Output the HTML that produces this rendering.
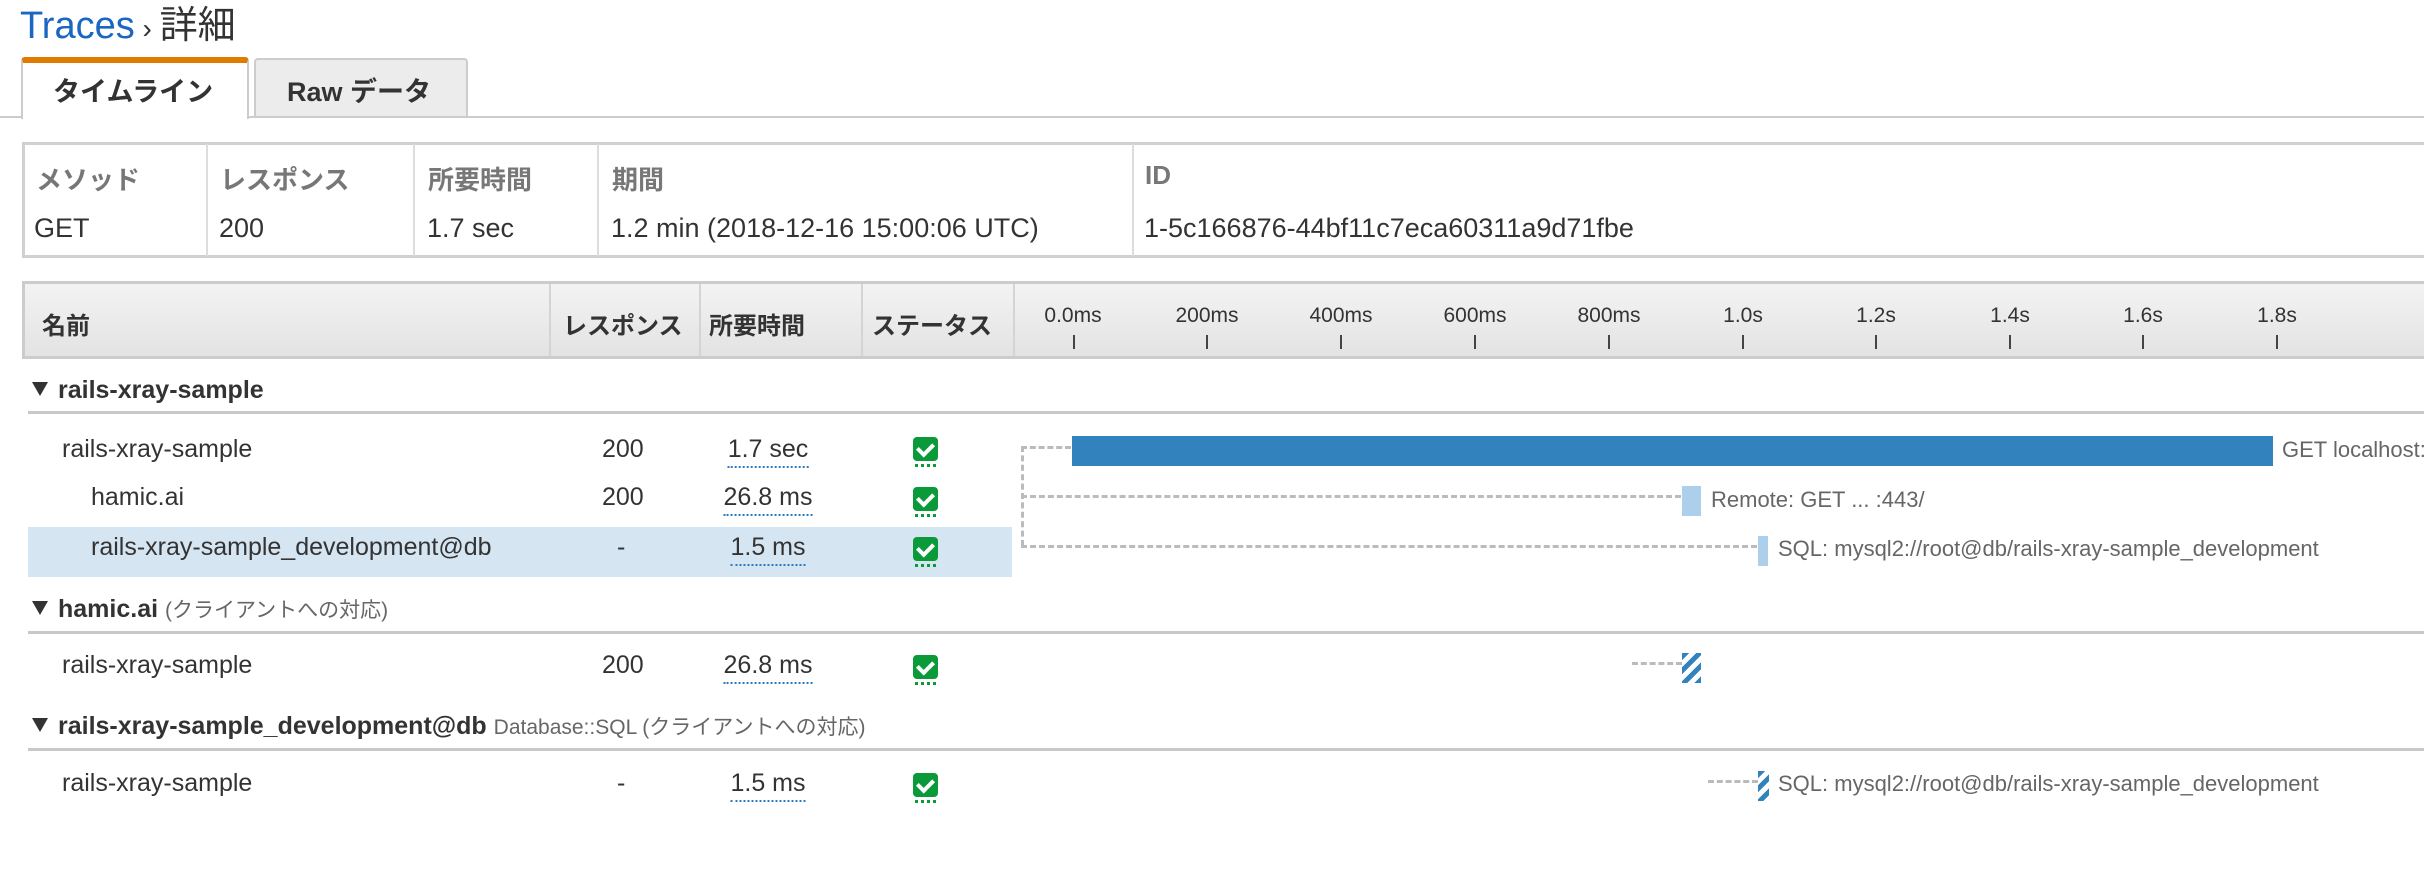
<!DOCTYPE html>
<html><head><meta charset="utf-8"><style>
*{margin:0;padding:0;box-sizing:border-box}
body{width:2424px;height:874px;overflow:hidden;background:#fff;font-family:"Liberation Sans","Noto Sans CJK JP",sans-serif;color:#333;position:relative}
.a{position:absolute;white-space:nowrap}
.hd{font-weight:bold;color:#777;font-size:26px}
.v{font-size:27px;color:#333}
.th{font-weight:bold;color:#333;font-size:24px}
.tl{font-size:21px;color:#333;transform:translateX(-50%)}
.tick{position:absolute;width:2px;height:14px;background:#444;top:335px}
.r{font-size:25px;color:#333}
.g{font-weight:bold;font-size:25px;color:#333}
.tri{display:inline-block;width:0;height:0;border-left:8px solid transparent;border-right:8px solid transparent;border-top:14px solid #333;margin-right:10px;vertical-align:2px}
.sub{font-size:21px;color:#666;font-weight:normal}
.dur{font-size:25px;border-bottom:2px dotted #2a7bbf;padding-bottom:2px;transform:translateX(-50%)}
.ck{position:absolute;width:25px;height:24px;background:#0a9a3a;border-radius:4px}
.ck:after{content:"";position:absolute;left:7px;top:3px;width:7px;height:12px;border:solid #fff;border-width:0 4px 4px 0;transform:rotate(45deg)}
.ckd{position:absolute;width:25px;border-bottom:3px dotted #0a9a3a}
.line{position:absolute;height:3px;background:#c8c8c8}
.dh{position:absolute;height:0;border-top:3px dashed #bbb}
.dv{position:absolute;width:0;border-left:3px dashed #bbb}
.lb{font-size:22px;color:#666}
.hatch{position:absolute;background:repeating-linear-gradient(135deg,#3182bd 0 5px,#fff 5px 10px)}
</style></head><body>

<div class="a" style="left:20px;top:-6px;font-size:38px;color:#1a66c2">Traces<span style="color:#333;font-size:28px"> › </span><span style="color:#333">詳細</span></div>

<!-- tabs -->
<div class="a" style="left:0;top:116px;width:2424px;height:2px;background:#ccc"></div>
<div class="a" style="left:21px;top:57px;width:228px;height:62px;background:#fff;border:2px solid #ccc;border-top:6px solid #e07b00;border-bottom:none;border-radius:4px 4px 0 0"></div>
<div class="a" style="left:53px;top:70px;font-size:27px;font-weight:bold">タイムライン</div>
<div class="a" style="left:254px;top:58px;width:214px;height:58px;background:#ececec;border:2px solid #ccc;border-bottom:none;border-radius:4px 4px 0 0"></div>
<div class="a" style="left:287px;top:70px;font-size:27px;font-weight:bold">Raw データ</div>

<!-- info table -->
<div class="a" style="left:22px;top:142px;width:2402px;height:116px;border:3px solid #d0d0d0;border-right:none"></div>
<div class="a" style="left:206px;top:144px;width:2px;height:112px;background:#ddd"></div>
<div class="a" style="left:413px;top:144px;width:2px;height:112px;background:#ddd"></div>
<div class="a" style="left:597px;top:144px;width:2px;height:112px;background:#ddd"></div>
<div class="a" style="left:1132px;top:144px;width:2px;height:112px;background:#ddd"></div>
<div class="a hd" style="left:36px;top:160px">メソッド</div>
<div class="a hd" style="left:220px;top:160px">レスポンス</div>
<div class="a hd" style="left:428px;top:160px">所要時間</div>
<div class="a hd" style="left:612px;top:160px">期間</div>
<div class="a hd" style="left:1145px;top:160px">ID</div>
<div class="a v" style="left:34px;top:213px">GET</div>
<div class="a v" style="left:219px;top:213px">200</div>
<div class="a v" style="left:427px;top:213px">1.7 sec</div>
<div class="a v" style="left:611px;top:213px">1.2 min (2018-12-16 15:00:06 UTC)</div>
<div class="a v" style="left:1144px;top:213px">1-5c166876-44bf11c7eca60311a9d71fbe</div>

<!-- main header -->
<div class="a" style="left:22px;top:281px;width:2402px;height:78px;background:linear-gradient(#f3f3f3,#e3e3e3);border:3px solid #ccc;border-right:none"></div>
<div class="a" style="left:549px;top:284px;width:2px;height:72px;background:#d4d4d4"></div>
<div class="a" style="left:699px;top:284px;width:2px;height:72px;background:#d4d4d4"></div>
<div class="a" style="left:861px;top:284px;width:2px;height:72px;background:#d4d4d4"></div>
<div class="a" style="left:1013px;top:284px;width:2px;height:72px;background:#d4d4d4"></div>
<div class="a th" style="left:42px;top:306px">名前</div>
<div class="a th" style="left:563px;top:306px">レスポンス</div>
<div class="a th" style="left:709px;top:306px">所要時間</div>
<div class="a th" style="left:872px;top:306px">ステータス</div>
<div class="a tl" style="left:1073px;top:304px">0.0ms</div><div class="tick" style="left:1073px"></div>
<div class="a tl" style="left:1207px;top:304px">200ms</div><div class="tick" style="left:1206px"></div>
<div class="a tl" style="left:1341px;top:304px">400ms</div><div class="tick" style="left:1340px"></div>
<div class="a tl" style="left:1475px;top:304px">600ms</div><div class="tick" style="left:1474px"></div>
<div class="a tl" style="left:1609px;top:304px">800ms</div><div class="tick" style="left:1608px"></div>
<div class="a tl" style="left:1743px;top:304px">1.0s</div><div class="tick" style="left:1742px"></div>
<div class="a tl" style="left:1876px;top:304px">1.2s</div><div class="tick" style="left:1875px"></div>
<div class="a tl" style="left:2010px;top:304px">1.4s</div><div class="tick" style="left:2009px"></div>
<div class="a tl" style="left:2143px;top:304px">1.6s</div><div class="tick" style="left:2142px"></div>
<div class="a tl" style="left:2277px;top:304px">1.8s</div><div class="tick" style="left:2276px"></div>

<!-- group 1 -->
<div class="a g" style="left:32px;top:376px"><span class="tri"></span>rails-xray-sample</div>
<div class="line" style="left:28px;top:411px;width:2396px"></div>
<div class="a" style="left:28px;top:527px;width:984px;height:50px;background:#d5e5f2"></div>

<div class="a r" style="left:62px;top:435px">rails-xray-sample</div>
<div class="a r" style="left:602px;top:435px">200</div>
<div class="a dur" style="left:768px;top:435px">1.7 sec</div>
<div class="ck" style="left:913px;top:437px"></div><div class="ckd" style="left:915px;top:464px;width:21px"></div>

<div class="a r" style="left:91px;top:483px">hamic.ai</div>
<div class="a r" style="left:602px;top:483px">200</div>
<div class="a dur" style="left:768px;top:483px">26.8 ms</div>
<div class="ck" style="left:913px;top:487px"></div><div class="ckd" style="left:915px;top:514px;width:21px"></div>

<div class="a r" style="left:91px;top:533px">rails-xray-sample_development@db</div>
<div class="a r" style="left:617px;top:533px">-</div>
<div class="a dur" style="left:768px;top:533px">1.5 ms</div>
<div class="ck" style="left:913px;top:537px"></div><div class="ckd" style="left:915px;top:564px;width:21px"></div>

<!-- timeline group1 -->
<div class="dv" style="left:1021px;top:446px;height:100px"></div>
<div class="dh" style="left:1021px;top:446px;width:50px"></div>
<div class="a" style="left:1072px;top:436px;width:1201px;height:30px;background:#3182bd"></div>
<div class="a lb" style="left:2282px;top:437px">GET localhost:</div>
<div class="dh" style="left:1021px;top:495px;width:660px"></div>
<div class="a" style="left:1682px;top:486px;width:19px;height:30px;background:#acd0eb"></div>
<div class="a lb" style="left:1711px;top:487px">Remote: GET ... :443/</div>
<div class="dh" style="left:1021px;top:545px;width:736px"></div>
<div class="a" style="left:1758px;top:536px;width:10px;height:30px;background:#acd0eb"></div>
<div class="a lb" style="left:1778px;top:536px">SQL: mysql2://root@db/rails-xray-sample_development</div>

<!-- group 2 -->
<div class="a g" style="left:32px;top:594px"><span class="tri"></span>hamic.ai <span class="sub">(クライアントへの対応)</span></div>
<div class="line" style="left:28px;top:631px;width:2396px"></div>
<div class="a r" style="left:62px;top:651px">rails-xray-sample</div>
<div class="a r" style="left:602px;top:651px">200</div>
<div class="a dur" style="left:768px;top:651px">26.8 ms</div>
<div class="ck" style="left:913px;top:655px"></div><div class="ckd" style="left:915px;top:682px;width:21px"></div>
<div class="dh" style="left:1632px;top:662px;width:50px"></div>
<div class="hatch" style="left:1682px;top:653px;width:19px;height:30px"></div>

<!-- group 3 -->
<div class="a g" style="left:32px;top:711px"><span class="tri"></span>rails-xray-sample_development@db <span class="sub">Database::SQL (クライアントへの対応)</span></div>
<div class="line" style="left:28px;top:748px;width:2396px"></div>
<div class="a r" style="left:62px;top:769px">rails-xray-sample</div>
<div class="a r" style="left:617px;top:769px">-</div>
<div class="a dur" style="left:768px;top:769px">1.5 ms</div>
<div class="ck" style="left:913px;top:773px"></div><div class="ckd" style="left:915px;top:800px;width:21px"></div>
<div class="dh" style="left:1708px;top:780px;width:50px"></div>
<div class="hatch" style="left:1758px;top:771px;width:11px;height:30px"></div>
<div class="a lb" style="left:1778px;top:771px">SQL: mysql2://root@db/rails-xray-sample_development</div>

</body></html>
